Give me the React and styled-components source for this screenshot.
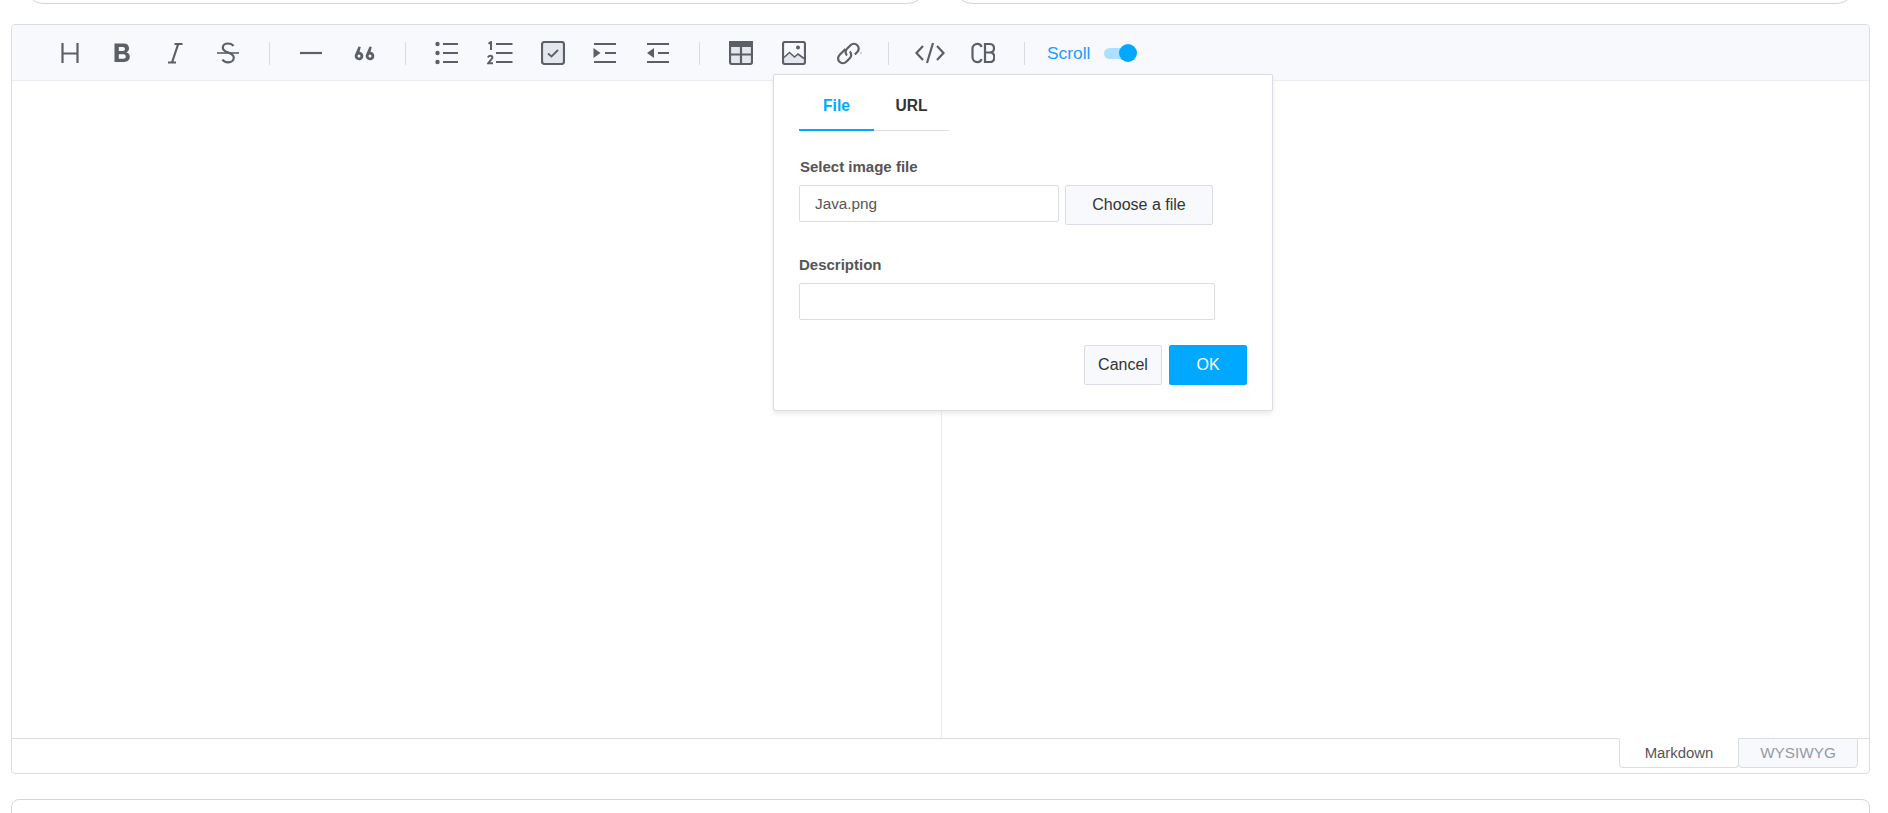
import React from "react";
import styled, { createGlobalStyle } from "styled-components";

const Global = createGlobalStyle`
  html, body { margin: 0; padding: 0; background: #fff; }
  body { font-family: "Liberation Sans", Arial, sans-serif; overflow: hidden; }
  * { box-sizing: border-box; }
`;

const Page = styled.div`
  width: 1888px;
  height: 813px;
  overflow: hidden;
  display: flex;
  flex-direction: column;
`;

const TopRow = styled.div`
  height: 4px;
  flex-shrink: 0;
  margin-bottom: 20px;
  padding: 0 32px 0 24px;
  display: flex;
  gap: 26px;
  overflow: hidden;
  align-items: flex-end;
`;

const Pill = styled.div`
  flex: 1;
  height: 40px;
  flex-shrink: 0;
  border: 1px solid #d3d5dc;
  border-radius: 20px;
`;

const Editor = styled.div`
  position: relative;
  margin: 0 18px 0 11px;
  height: 750px;
  border: 1px solid #dadde6;
  border-radius: 4px;
  display: flex;
  flex-direction: column;
  flex-shrink: 0;
`;

const Toolbar = styled.div`
  height: 56px;
  flex-shrink: 0;
  background: #f7f9fc;
  border-bottom: 1px solid #ebedf2;
  border-radius: 3px 3px 0 0;
  display: flex;
  align-items: center;
  padding: 1px 0 0 31.5px;
`;

const ToolButton = styled.button`
  width: 52.6px;
  height: 32px;
  border: 0;
  padding: 0;
  background: none;
  display: flex;
  align-items: center;
  justify-content: center;
`;

const Divider = styled.span`
  width: 1px;
  height: 23px;
  margin: 0 15px;
  background: #d9dbe2;
`;

const ScrollLabel = styled.span`
  font-size: 17.4px;
  color: #1f9cff;
  margin-left: 7px;
`;

const SwitchTrack = styled.span`
  position: relative;
  width: 28px;
  height: 11px;
  margin-left: 13px;
  border-radius: 6px;
  background: #addfff;
`;

const SwitchKnob = styled.span`
  position: absolute;
  right: -5px;
  top: -3.5px;
  width: 18px;
  height: 18px;
  border-radius: 50%;
  background: #00a9ff;
`;

const Body = styled.div`
  flex: 1;
  display: flex;
`;

const Pane = styled.div`
  width: 930px;
  border-right: 1px solid #ebedf2;
`;

const ModeBar = styled.div`
  height: 35px;
  flex-shrink: 0;
  border-top: 1px solid #dadde6;
  padding-right: 11px;
  display: flex;
  justify-content: flex-end;
  align-items: flex-start;
`;

const ModeTab = styled.div`
  width: 120px;
  height: 30px;
  margin-top: -1px;
  margin-left: ${(p) => (p.$active ? "0" : "-1px")};
  border: 1px solid #dadde6;
  border-top: ${(p) => (p.$active ? "1px solid #fff" : "1px solid #dadde6")};
  border-radius: 0 0 4px 4px;
  background: ${(p) => (p.$active ? "#fff" : "#f7f9fc")};
  color: ${(p) => (p.$active ? "#555" : "#969aa5")};
  font-size: ${(p) => (p.$active ? "14.9px" : "15.3px")};
  display: flex;
  align-items: center;
  justify-content: center;
`;

const NextCard = styled.div`
  margin: 25px 18px 0 11px;
  height: 60px;
  flex-shrink: 0;
  border: 1px solid #d3d5dc;
  border-radius: 8px;
`;

const Popup = styled.div`
  position: absolute;
  left: 761px;
  top: 49px;
  width: 500px;
  height: 337px;
  background: #fff;
  border: 1px solid #dadde6;
  border-radius: 2px;
  box-shadow: 0 3px 4px 0 rgba(0, 0, 0, 0.08);
  padding: 0 25px;
  display: flex;
  flex-direction: column;
`;

const Tabs = styled.div`
  display: flex;
  width: 150px;
  margin-top: 6px;
  border-bottom: 1px solid #dadde6;
`;

const Tab = styled.div`
  width: 75px;
  height: 50px;
  margin-bottom: -1px;
  padding-top: 2px;
  display: flex;
  align-items: center;
  justify-content: center;
  font-size: 15.6px;
  font-weight: 700;
  color: ${(p) => (p.$active ? "#00a9ff" : "#333")};
  border-bottom: 2px solid ${(p) => (p.$active ? "#00a9ff" : "transparent")};
`;

const FieldLabel = styled.label`
  display: block;
  font-size: 15px;
  font-weight: 700;
  color: #555;
  margin-top: ${(p) => p.$top}px;
  margin-bottom: 10px;
  padding-left: ${(p) => p.$indent || 0}px;
  line-height: 17px;
`;

const FileRow = styled.div`
  display: flex;
  align-items: flex-start;
  gap: 6px;
`;

const TextField = styled.div`
  width: ${(p) => p.$w}px;
  height: 37px;
  padding-left: 15px;
  border: 1px solid #dadde6;
  border-radius: 2px;
  display: flex;
  align-items: center;
  color: #555;
  font-size: 15.3px;
`;

const BaseButton = styled.button`
  font-family: inherit;
  font-size: 16px;
  padding: 0;
  border-radius: 2px;
  border: 1px solid #dadde6;
  background: #f7f9fc;
  color: #333;
`;

const ChooseButton = styled(BaseButton)`
  width: 148px;
  height: 40px;
`;

const Actions = styled.div`
  display: flex;
  justify-content: flex-end;
  gap: 7px;
  margin-top: 25px;
`;

const CancelButton = styled(BaseButton)`
  width: 78px;
  height: 40px;
`;

const OkButton = styled(BaseButton)`
  width: 78px;
  height: 40px;
  border-color: #00a9ff;
  background: #00a9ff;
  color: #fff;
`;

const ink = "#5c5f66";

const Icon = ({ children, w = 24, h = 24 }) => (
  <svg width={w} height={h} viewBox={`0 0 ${w} ${h}`} fill="none" stroke={ink} strokeWidth="2.2">
    {children}
  </svg>
);

const HeadingIcon = () => (
  <Icon>
    <path d="M4.500 2v20M19.500 2v20M4.500 12.500h15" />
  </Icon>
);
const BoldIcon = () => (
  <Icon>
    <path
      d="M4.500 2.500h9c3.500 0 5.500 1.700 5.500 4.700 0 2-1 3.400-2.700 4.100 2.200.6 3.500 2.200 3.500 4.500 0 3.300-2.400 5.200-5.900 5.200H4.500z M8.800 6v4h4c1.400 0 2.200-.8 2.200-2s-.8-2-2.200-2z M8.800 13.300v4.500h4.600c1.500 0 2.400-.8 2.400-2.200s-.9-2.300-2.400-2.300z"
      fill={ink}
      fillRule="evenodd"
      stroke="none"
    />
  </Icon>
);
const ItalicIcon = () => (
  <Icon>
    <path d="M11.500 3h8M5 21.500h8M15.200 3 9 21.500" />
  </Icon>
);
const StrikeIcon = () => (
  <Icon>
    <path d="M1 12h22" strokeWidth="1.600" />
    <path d="M17.500 5c-1-1.500-3-2.500-5.500-2.500-3 0-5.200 1.700-5.200 4.200 0 5.500 11 4.300 11 10 0 2.700-2.400 4.600-5.600 4.600-2.800 0-4.700-1-5.700-2.800" />
  </Icon>
);
const RuleIcon = () => (
  <Icon>
    <path d="M1 12h22" />
  </Icon>
);
const QuoteIcon = () => (
  <Icon>
    <path
      d="M6.500 5.500 3.500 12.500a4.300 4.300 0 1 0 4-1.800l1.300-4.700z M17.500 5.500l-3 7a4.300 4.300 0 1 0 4-1.800l1.300-4.700z"
      fill={ink}
      stroke="none"
    />
    <circle cx="7" cy="15" r="1.500" fill="#f7f9fc" stroke="none" />
    <circle cx="18" cy="15" r="1.500" fill="#f7f9fc" stroke="none" />
  </Icon>
);
const BulletIcon = () => (
  <Icon>
    <circle cx="2.500" cy="3" r="2.200" fill={ink} stroke="none" />
    <circle cx="2.500" cy="12" r="2.200" fill={ink} stroke="none" />
    <circle cx="2.500" cy="21" r="2.200" fill={ink} stroke="none" />
    <path d="M8 3h15M8 12h15M8 21h15" />
  </Icon>
);
const OrderedIcon = () => (
  <svg width="26" height="24" viewBox="0 0 26 24" fill="none" stroke={ink} strokeWidth="2.2">
    <path d="M9 3h16.500M9 12h16.500M9 21h16.500" />
    <path d="M1.500 2.800 4 1v8" strokeWidth="2" />
    <path d="M1 16.500c.3-1.300 1.200-1.800 2.300-1.800 1.300 0 2.100.8 2.100 1.800 0 1.500-2.600 3.200-4.200 5.800h4.800" strokeWidth="2" />
  </svg>
);
const TaskIcon = () => (
  <Icon>
    <rect x="1" y="1" width="22" height="22" rx="2.500" fill="#e4e7ed" />
    <path d="m7 12.500 3.500 3L17 9" strokeWidth="1.800" />
  </Icon>
);
const IndentIcon = () => (
  <Icon>
    <path d="M1 3h22M1 21h22M12 12h11" />
    <path d="M.500 7 7.500 12 .500 17z" fill={ink} stroke="none" />
  </Icon>
);
const OutdentIcon = () => (
  <Icon>
    <path d="M1 3h22M1 21h22M12 12h11" />
    <path d="M8 7 1 12 8 17z" fill={ink} stroke="none" />
  </Icon>
);
const TableIcon = () => (
  <Icon>
    <rect x="1" y="1" width="22" height="22" rx="2" fill="#e4e7ed" />
    <path d="M1 1h22v4H1z" fill={ink} />
    <path d="M12 4v19M1 13.500h22" />
  </Icon>
);
const ImageIcon = () => (
  <Icon>
    <path d="m2 17 5.500-5 5 4 3.500-3 6 4.500V22H2z" fill="#e4e7ed" stroke="none" />
    <rect x="1" y="1" width="22" height="22" rx="2" />
    <path d="m2 16.500 5.500-5 5 4.500 3.500-3 6 4.500" strokeWidth="1.600" />
    <circle cx="16" cy="6.500" r="2" fill={ink} stroke="none" />
  </Icon>
);
const LinkIcon = () => (
  <svg width="30" height="24" viewBox="0 0 30 24" fill="none" stroke={ink} strokeWidth="2.2">
    <g transform="translate(3 0)">
      <path d="M10.500 8 4.500 14a4.800 4.800 0 0 0 6.800 6.800l3.500-3.500a4.800 4.800 0 0 0 0-6.800" />
      <path d="M12 14.500a4.800 4.800 0 0 1 0-6.800l3.500-3.500a4.800 4.800 0 0 1 6.800 6.800l-2.500 2.500" />
    </g>
    <circle cx="29" cy="12" r=".7" fill="#888" stroke="none" />
  </svg>
);
const CodeIcon = () => (
  <svg width="30" height="24" viewBox="0 0 30 24" fill="none" stroke={ink} strokeWidth="2.2">
    <path d="M8 5 1.500 12 8 19M22 5l6.500 7L22 19M18 2l-6 20" />
  </svg>
);
const CodeBlockLabel = () => (
  <svg width="24" height="24" viewBox="0 0 24 24" fill="none" stroke={ink} strokeWidth="2.2">
    <path d="M10.500 6C10 4 8.500 2.800 6.500 2.800 3.500 2.800 1.500 5 1.500 8v8c0 3 2 5.200 5 5.200 2 0 3.500-1.200 4-3.200" />
    <path d="M14 3h4.500c2.800 0 4.500 1.600 4.500 4.200 0 2.600-1.700 4.300-4.500 4.300H14zM14 11.500h5c2.700 0 4.300 1.700 4.300 4.700S21.700 21 19 21h-5z" />
  </svg>
);

const iconRow1 = [HeadingIcon, BoldIcon, ItalicIcon, StrikeIcon];
const iconRow2 = [RuleIcon, QuoteIcon];
const iconRow3 = [BulletIcon, OrderedIcon, TaskIcon, IndentIcon, OutdentIcon];
const iconRow4 = [TableIcon, ImageIcon, LinkIcon];
const iconRow5 = [CodeIcon, CodeBlockLabel];

const Group = ({ items }) =>
  items.map((I, i) => (
    <ToolButton key={i}>
      <I />
    </ToolButton>
  ));

export default function App() {
  return (
    <Page>
      <Global />
      <TopRow>
        <Pill />
        <Pill />
      </TopRow>
      <Editor>
        <Toolbar>
          <Group items={iconRow1} />
          <Divider />
          <Group items={iconRow2} />
          <Divider />
          <Group items={iconRow3} />
          <Divider />
          <Group items={iconRow4} />
          <Divider />
          <Group items={iconRow5} />
          <Divider />
          <ScrollLabel>Scroll</ScrollLabel>
          <SwitchTrack>
            <SwitchKnob />
          </SwitchTrack>
        </Toolbar>
        <Body>
          <Pane />
        </Body>
        <ModeBar>
          <ModeTab $active>Markdown</ModeTab>
          <ModeTab>WYSIWYG</ModeTab>
        </ModeBar>
        <Popup>
          <Tabs>
            <Tab $active>File</Tab>
            <Tab>URL</Tab>
          </Tabs>
          <FieldLabel $top={27} $indent={1}>Select image file</FieldLabel>
          <FileRow>
            <TextField $w={260}>Java.png</TextField>
            <ChooseButton>Choose a file</ChooseButton>
          </FileRow>
          <FieldLabel $top={31}>Description</FieldLabel>
          <TextField $w={416} />
          <Actions>
            <CancelButton>Cancel</CancelButton>
            <OkButton>OK</OkButton>
          </Actions>
        </Popup>
      </Editor>
      <NextCard />
    </Page>
  );
}
